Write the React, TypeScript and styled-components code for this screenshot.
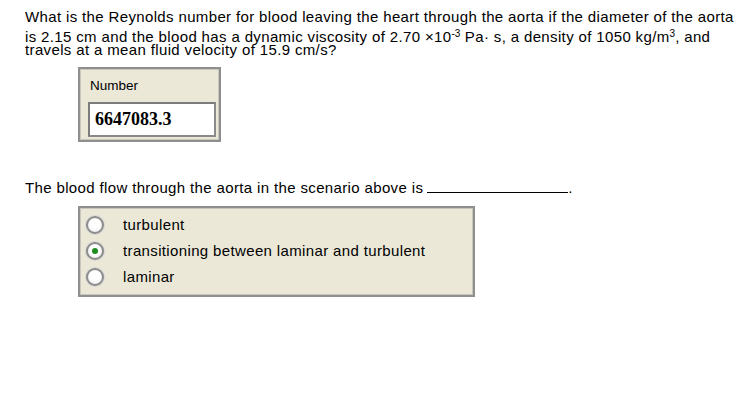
import React from "react";
import styled, { createGlobalStyle } from "styled-components";

const GlobalStyle = createGlobalStyle`
  html, body {
    margin: 0;
    padding: 0;
    background: #ffffff;
  }
  body {
    font-family: "Liberation Sans", Arial, sans-serif;
    color: #000;
  }
`;

const Page = styled.div`
  width: 756px;
  height: 409px;
  box-sizing: border-box;
  padding: 11px 0 0 25px;
  background: #fff;
`;

const Question = styled.div`
  font-size: 15px;
  letter-spacing: 0.36px;
  line-height: 12px;
`;

const Line = styled.div<{ $top?: number }>`
  margin-top: ${(p) => p.$top ?? 0}px;
  height: 12px;
  white-space: nowrap;
`;

const Sup = styled.sup`
  font-size: 10px;
  line-height: 0;
  letter-spacing: 0;
  vertical-align: 5px;
`;

const Panel = styled.div`
  background: #ebe8d8;
  border: 2px solid #8f8f8f;
  box-shadow: inset 0 0 0 1px #c9c7bd;
  box-sizing: border-box;
`;

const NumberPanel = styled(Panel)`
  margin: 11px 0 0 53px;
  width: 143px;
  height: 75px;
  padding: 9px 0 0 8px;
`;

const Label = styled.div`
  font-size: 13.5px;
  line-height: 15px;
  margin-left: 2px;
`;

const Input = styled.div`
  margin-top: 9px;
  width: 128px;
  height: 35px;
  box-sizing: border-box;
  background: #fff;
  border: 2px solid #7c7c7c;
  border-right-color: #8a8a8a;
  border-bottom-color: #8a8a8a;
  padding: 6px 0 0 5px;
  font-family: "Liberation Serif", "Times New Roman", serif;
  font-weight: bold;
  font-size: 18px;
  line-height: 19px;
`;

const Sentence = styled.div`
  margin-top: 38px;
  font-size: 15px;
  letter-spacing: 0.36px;
  line-height: 16px;
  white-space: nowrap;
`;

const Blank = styled.span`
  display: inline-block;
  width: 141px;
  border-bottom: 1px solid #000;
  height: 12px;
  margin-left: 4px;
  vertical-align: baseline;
`;

const ChoicePanel = styled(Panel)`
  margin: 10px 0 0 53px;
  width: 397px;
  height: 91px;
  padding: 8px 0 0 6px;
  display: flex;
  flex-direction: column;
  gap: 8px;
`;

const Choice = styled.label`
  display: flex;
  align-items: center;
  gap: 19px;
  font-size: 15px;
  letter-spacing: 0.36px;
  line-height: 18px;
  height: 18px;
`;

const Radio = styled.span<{ $checked?: boolean }>`
  width: 18px;
  height: 18px;
  box-sizing: border-box;
  border-radius: 50%;
  border: 2px solid #8c8c8c;
  background: radial-gradient(circle at 50% 40%, #ffffff 45%, #e2e2e2 100%);
  box-shadow: 0 0 0 1px #d6d6d6;
  display: flex;
  align-items: center;
  justify-content: center;
  flex-shrink: 0;

  &::after {
    content: "";
    display: ${(p) => (p.$checked ? "block" : "none")};
    width: 6px;
    height: 6px;
    border-radius: 50%;
    background: #1f8c1f;
  }
`;

const options = [
  { id: "turb", text: "turbulent", checked: false },
  { id: "trans", text: "transitioning between laminar and turbulent", checked: true },
  { id: "lam", text: "laminar", checked: false },
];

export default function App() {
  return (
    <>
      <GlobalStyle />
      <Page>
        <Question>
          <Line>
            What is the Reynolds number for blood leaving the heart through the aorta if the diameter of the aorta
          </Line>
          <Line $top={8}>
            is 2.15 cm and the blood has a dynamic viscosity of 2.70 ×10<Sup>-3</Sup> Pa· s, a density of 1050 kg/m
            <Sup>3</Sup>, and
          </Line>
          <Line $top={1}>travels at a mean fluid velocity of 15.9 cm/s?</Line>
        </Question>

        <NumberPanel>
          <Label>Number</Label>
          <Input>6647083.3</Input>
        </NumberPanel>

        <Sentence>
          The blood flow through the aorta in the scenario above is
          <Blank />.
        </Sentence>

        <ChoicePanel>
          {options.map((o) => (
            <Choice key={o.id}>
              <Radio $checked={o.checked} />
              {o.text}
            </Choice>
          ))}
        </ChoicePanel>
      </Page>
    </>
  );
}
